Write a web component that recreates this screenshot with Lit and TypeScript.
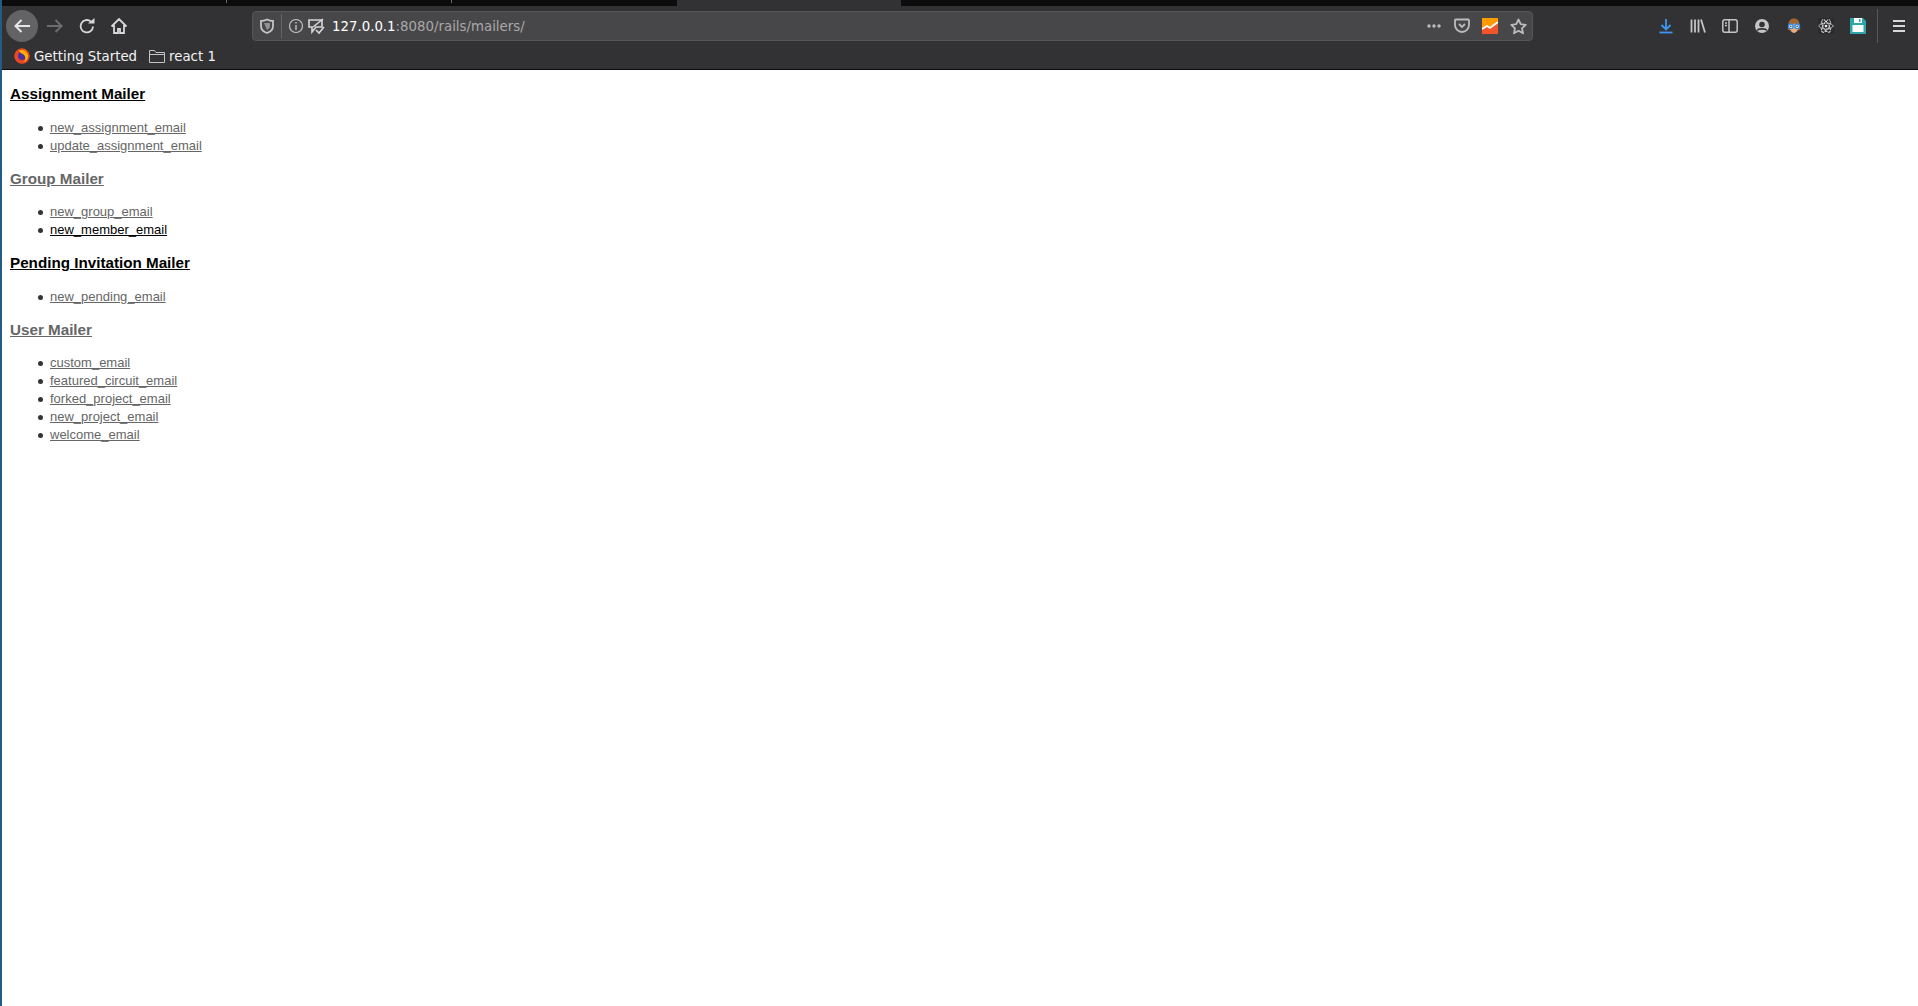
import { LitElement, html, css, svg } from "lit";
import { customElement } from "lit/decorators.js";

const groups = [
  { title: "Assignment Mailer", visited: false, items: [["new_assignment_email", true], ["update_assignment_email", true]] },
  { title: "Group Mailer", visited: true, items: [["new_group_email", true], ["new_member_email", false]] },
  { title: "Pending Invitation Mailer", visited: false, items: [["new_pending_email", true]] },
  { title: "User Mailer", visited: true, items: [["custom_email", true], ["featured_circuit_email", true], ["forked_project_email", true], ["new_project_email", true], ["welcome_email", true]] },
] as { title: string; visited: boolean; items: [string, boolean][] }[];

const ic = (w: number, h: number, body: unknown, cls = "") =>
  html`<svg class="ic ${cls}" width=${w} height=${h} viewBox="0 0 ${w} ${h}" fill="none">${body}</svg>`;

@customElement("app-root")
export class AppRoot extends LitElement {
  static styles = css`
    :host { display: block; height: 1006px; background: #fff; border-left: 2px solid #265a86; box-sizing: border-box; overflow: hidden; font-family: "Liberation Sans", Arial, sans-serif; }
    .tabs { height: 6px; background: #0c0c0d; display: flex; }
    .seg { width: 224px; flex: none; }
    .tick { width: 1px; height: 3px; background: #6a6a6c; flex: none; }
    .tab-active { width: 224px; background: #323234; flex: none; margin-left: 1px; }
    .chrome { background: #323234; height: 64px; border-bottom: 1px solid #0c0c0d; box-sizing: border-box; font-family: "DejaVu Sans", sans-serif; }
    .nav { height: 40px; display: flex; align-items: center; }
    .ic { display: block; flex: none; }
    .back { width: 32px; height: 32px; border-radius: 50%; background: #636365; display: flex; align-items: center; justify-content: center; margin-left: 4px; }
    .btn { width: 32px; display: flex; justify-content: center; }
    .fwd { margin-left: 1px; }
    .urlbar { margin-left: 117px; width: 1281px; height: 30px; box-sizing: border-box; background: #474749; border: 1px solid #565658; border-radius: 4px; display: flex; align-items: center; font-size: 13.33px; padding-left: 2px; }
    .urlbar .sep { width: 1px; height: 24px; background: #636365; margin: 0 6px 0 2px; }
    .msg { margin-left: 3px; }
    .host { color: #fff; margin-left: 7px; }
    .path { color: #a9a9aa; }
    .spacer { flex: 1; }
    .ubtn { width: 28px; display: flex; justify-content: center; flex: none; }
    .right { display: flex; align-items: center; margin-left: 125px; gap: 16px; }
    .divider { width: 1px; height: 34px; background: #58585a; margin-left: -5px; margin-right: -3px; }
    .bm { height: 20px; display: flex; align-items: center; color: #f2f2f2; font-size: 13.33px; padding-left: 12px; }
    .bm span { margin-left: 4px; }
    .folder { margin-left: 12px; }
    main { padding: 4.2px 0 0 8px; font-size: 13px; line-height: 18px; color: #000; }
    h3 { font-size: 15.21px; line-height: 18px; margin: 0; padding-top: 11px; font-weight: 700; }
    a { color: #000; text-decoration: underline; }
    a.v { color: #666; }
    ul { margin: 15.4px 0 4.2px; padding: 0 0 0 40px; list-style: none; }
    li { position: relative; }
    li::before { content: ""; position: absolute; left: -12px; top: 7px; width: 5px; height: 5px; border-radius: 50%; background: #333; }
  `;

  render() {
    const grey = "#d7d7d8";
    const mid = "#bcbcbd";
    return html`
      <div class="tabs"><div class="seg"></div><div class="tick"></div><div class="seg"></div><div class="tick"></div><div class="seg"></div><div class="tab-active"></div></div>
      <div class="chrome">
        <div class="nav">
          <div class="back">${ic(18, 18, svg`<path d="M17 9H2.500M8.500 3L2.500 9l6 6" stroke="#e6e6e7" stroke-width="2"/>`)}</div>
          <div class="btn fwd">${ic(18, 18, svg`<path d="M1 9h14.500M9.500 3l6 6-6 6" stroke="#6d6d6f" stroke-width="2"/>`)}</div>
          <div class="btn">${ic(18, 18, svg`<path d="M15 9.500A6.200 6.200 0 1 1 12.800 4.500" stroke="${grey}" stroke-width="1.800"/><path d="M10 6.500h6.500v-5.500z" fill="${grey}"/>`)}</div>
          <div class="btn">${ic(18, 18, svg`<path d="M1.500 9.500L9 2l7.500 7.500M4 8v8h4v-4h2v4h4V8" stroke="${grey}" stroke-width="1.800"/>`)}</div>
          <div class="urlbar">
            ${ic(24, 18, svg`<path d="M6 4c2 0 4-.5 6-1.500 2 1 4 1.500 6 1.500v5c0 4-3 6-6 7-3-1-6-3-6-7z" stroke="#c4c4c5" stroke-width="1.800"/><path d="M9 6h6v3c0 2-1.500 3-3 4z" fill="#c4c4c5" opacity=".6"/>`)}
            <div class="sep"></div>
            ${ic(16, 16, svg`<circle cx="8" cy="8" r="6.500" stroke="#c4c4c5" stroke-width="1.200"/><path d="M8 7v5M8 4v1.500" stroke="#c4c4c5" stroke-width="1.400"/>`)}
            ${ic(18, 18, svg`<path d="M2 3h13v7H9l-4 5v-5H2z" stroke="#d7d7d8" stroke-width="1.600"/><path d="M6 10l10-8M9 13l3 3 5-6" stroke="#d7d7d8" stroke-width="1.600"/>`, "msg")}
            <div class="host">127.0.0.1<span class="path">:8080/rails/mailers/</span></div>
            <div class="spacer"></div>
            <div class="ubtn">${ic(16, 16, svg`<g fill="${mid}"><circle cx="3" cy="8" r="1.700"/><circle cx="8" cy="8" r="1.700"/><circle cx="13" cy="8" r="1.700"/></g>`)}</div>
            <div class="ubtn">${ic(16, 16, svg`<path d="M1.800 1.500h12.400a.8.8 0 0 1 .8.800V7a7 7 0 0 1-14 0V2.300a.8.8 0 0 1 .8-.8z" stroke="${mid}" stroke-width="1.800"/><path d="M5 6l3 3 3-3" stroke="${mid}" stroke-width="1.800"/>`)}</div>
            <div class="ubtn">${ic(16, 16, svg`<rect width="16" height="16" fill="#ff9a00"/><path d="M0 16V11l5-3 3 2 8-6v12z" fill="#f2552c"/><path d="M0 11l5-3 3 2 8-6" stroke="#fff" stroke-width="1.800"/>`)}</div>
            <div class="ubtn">${ic(17, 17, svg`<path d="M8.500 1.500l2.200 4.700 5 .6-3.700 3.500 1 5-4.500-2.500-4.500 2.500 1-5L1.300 6.800l5-.6z" stroke="${mid}" stroke-width="1.800" stroke-linejoin="round"/>`)}</div>
          </div>
          <div class="right">
            ${ic(16, 16, svg`<path d="M8 1v10M3.500 7L8 11.500 12.500 7" stroke="#3d97f2" stroke-width="1.800"/><path d="M1.500 14.500h13" stroke="#3d97f2" stroke-width="1.800"/>`)}
            ${ic(16, 16, svg`<path d="M1.500 1.500v13M5 1.500v13M8.500 1.500v13M11 1.500l4 13" stroke="#c4c4c5" stroke-width="1.800"/>`)}
            ${ic(16, 16, svg`<rect x=".8" y="1.800" width="14.400" height="12.400" rx="2" stroke="#c4c4c5" stroke-width="1.500"/><path d="M7 2v12M3 5h2M3 7.500h2" stroke="#c4c4c5" stroke-width="1.500"/>`)}
            ${ic(16, 16, svg`<circle cx="8" cy="8" r="7" fill="#c4c4c5"/><circle cx="8" cy="6.500" r="2.800" fill="#323234"/><path d="M3.300 12.500c1-2.200 8.400-2.200 9.400 0" stroke="#323234" stroke-width="1.600"/>`)}
            ${ic(16, 16, svg`<path d="M2.500 8C2 3 4.500.500 8 .500S14 3 13.500 8l1 3.500-2.500 1H4l-2.500-1z" fill="#a5642d"/><path d="M3.500 9c0-2 2-3.500 4.500-3.500S12.500 7 12.500 9s-2 6-4.500 6-4.500-4-4.500-6z" fill="#e6ad7e"/><path d="M4 6c2 .5 5 0 6-2 1 1 2 2 2.500 3.500L8 4z" fill="#a5642d"/><circle cx="4.800" cy="8.300" r="2.300" fill="#fff" stroke="#2f8cec" stroke-width="1.400"/><circle cx="11.200" cy="8.300" r="2.300" fill="#fff" stroke="#2f8cec" stroke-width="1.400"/><circle cx="4.800" cy="8.300" r=".8" fill="#222"/><circle cx="11.200" cy="8.300" r=".8" fill="#222"/>`)}
            ${ic(16, 16, svg`<rect width="16" height="16" fill="#2b2b2d"/><g stroke="#eee" stroke-width="1" stroke-dasharray="1.500 .7"><ellipse cx="8" cy="8" rx="7" ry="3"/><ellipse cx="8" cy="8" rx="7" ry="3" transform="rotate(60 8 8)"/><ellipse cx="8" cy="8" rx="7" ry="3" transform="rotate(120 8 8)"/></g><circle cx="8" cy="8" r="1.300" fill="#eee"/>`)}
            ${ic(16, 16, svg`<path d="M0 0h13l3 3v13H0z" fill="#2ea5a8"/><path d="M2.500 7h11v7h-11z" fill="#fff"/><path d="M4 0h8v5H4z" fill="#fff"/><path d="M9 1h1.500v3H9z" fill="#2ea5a8"/>`)}
            <div class="divider"></div>
            ${ic(16, 16, svg`<path d="M2 3h12M2 8h12M2 13h12" stroke="#d7d7d8" stroke-width="1.800"/>`)}
          </div>
        </div>
        <div class="bm">
          ${ic(16, 16, svg`<circle cx="8" cy="8" r="7.500" fill="#ff9500"/><path d="M8 .5A7.500 7.500 0 0 0 2 12.500c2 3 6 3.500 8 3 3-.5 5.500-3.500 5.500-7.500 0-1-.2-2-.5-2.800C14 3 12 1 8 .5z" fill="#e8362d" opacity=".85"/><circle cx="8" cy="8" r="4" fill="#4b2f9a"/><path d="M5 2.500C9 1 13 3 14 7c.6 3-1 6-4.500 7.200 2-2 2.500-4.700 1-6.700C9 5.500 6 5.500 5 2.500z" fill="#ffb000"/>`)}
          <span>Getting Started</span>
          ${ic(16, 16, svg`<path d="M.5 14.500V2.500h5l1.500 2h8.500v10z" stroke="#c4c4c5"/><path d="M.5 6.500h15" stroke="#c4c4c5"/>`, "folder")}
          <span>react 1</span>
        </div>
      </div>
      <main>
        ${groups.map((g) => html`
          <h3><a class=${g.visited ? "v" : ""} href="#">${g.title}</a></h3>
          <ul>${g.items.map(([n, v]) => html`<li><a class=${v ? "v" : ""} href="#">${n}</a></li>`)}</ul>
        `)}
      </main>
    `;
  }
}
